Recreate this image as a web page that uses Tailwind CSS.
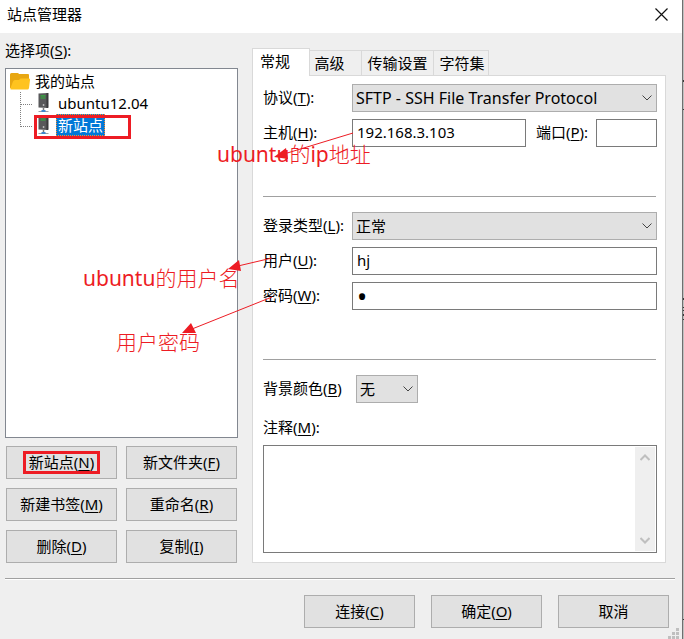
<!DOCTYPE html>
<html lang="zh-CN">
<head>
<meta charset="utf-8">
<meta name="viewport" content="width=device-width, initial-scale=1">
<title>站点管理器</title>
<script src="https://cdn.jsdelivr.net/npm/@tailwindcss/browser@4"></script>
</head>
<body class="min-h-screen bg-[#efefef] font-['Noto_Sans','Noto_Sans_CJK_SC',sans-serif] text-[15px] leading-5 text-black">
<div class="relative flex min-h-screen">
  <div class="flex min-w-0 flex-1 flex-col border-r border-[#6f6f6f]">
    <header class="flex h-[33px] items-center justify-between bg-white pr-[14px] pb-1 pl-[7px]">
      <h1 class="pb-[2px]">站点管理器</h1>
      <button type="button" aria-label="关闭">
        <svg class="block size-[13px]" viewBox="0 0 13 13" fill="none" stroke="#111" stroke-width="1.2"><path d="M.5.5l12 12M12.500.5l-12 12"/></svg>
      </button>
    </header>

    <main class="flex flex-1 gap-[14px] pr-4 pl-[5px]">
      <section class="flex w-[233px] shrink-0 flex-col pt-[7px]">
        <h2 id="tree-label">选择项(<u class="underline-offset-2">S</u>):</h2>
        <div role="tree" aria-labelledby="tree-label" class="mt-2 flex-1 border border-[#828790] bg-white pt-px pl-1">
          <div role="treeitem" class="flex h-[22px] items-center gap-[5px]">
            <svg class="h-[17px] w-5" viewBox="0 0 20 17"><path d="M0 1.500Q0 0 1.500 0h6q1 0 1.500 1h9q1 0 1 1v13H0z" fill="#e8a712"/><path d="M1.500 16.500Q0 16.500.5 15L3 8.500Q3.500 7 5 7h4l1.500-1.500H19q1.200 0 1 1.500l-1 8q-.3 1.500-1.500 1.500z" fill="#ffc31f"/></svg>
            <span>我的站点</span>
          </div>
          <div class="flex">
            <svg class="h-[44px] w-[28px]" viewBox="0 0 28 44" fill="none" stroke="#808080" stroke-dasharray="1 1"><path d="M10.500 0v35M11 12.500h12M11 34.500h12"/></svg>
            <div>
              <div role="treeitem" class="flex h-[22px] items-center gap-2">
                <svg class="h-5 w-3" viewBox="0 0 12 20"><path d="M.5.5L10 0v15l-9.500-.5z" fill="#58585a"/><path d="M8.500 0H10l.5.5v14l-.5.5H8.500z" fill="#39393b"/><path d="M2.500 2.800h5M2.500 5h5" stroke="#2fb43a" stroke-width="1.200"/><path d="M4.800 11h1.500v2H4.800z" fill="#b5b5b5"/><path d="M5.500 15v3" stroke="#777" stroke-width="1.500"/><path d="M.5 18.500h10" stroke="#9a9fa6"/><path d="M3.500 18h4" stroke="#3f86cc" stroke-width="2"/></svg>
                <span>ubuntu12.04</span>
              </div>
              <div role="treeitem" aria-selected="true" class="relative flex h-[22px] items-center gap-[6px]">
                <svg class="h-5 w-3" viewBox="0 0 12 20"><path d="M.5.5L10 0v15l-9.500-.5z" fill="#58585a"/><path d="M8.500 0H10l.5.5v14l-.5.5H8.500z" fill="#39393b"/><path d="M2.500 2.800h5M2.500 5h5" stroke="#2fb43a" stroke-width="1.200"/><path d="M4.800 11h1.500v2H4.800z" fill="#b5b5b5"/><path d="M5.500 15v3" stroke="#777" stroke-width="1.500"/><path d="M.5 18.500h10" stroke="#9a9fa6"/><path d="M3.500 18h4" stroke="#3f86cc" stroke-width="2"/></svg>
                <span class="border border-dotted border-[#ff8728] bg-[#0078d7] px-px text-white">新站点</span>
                <span class="absolute top-px -left-1 h-6 w-[97px] border-3 border-[#ed1c24]"></span>
              </div>
            </div>
          </div>
        </div>
        <div class="mx-px mt-2 grid grid-cols-2 gap-[9px]">
          <button type="button" class="relative h-[33px] border border-[#adadad] bg-[#e1e1e1] pb-[2px]">新站点(<u class="underline-offset-2">N</u>)<span class="absolute inset-x-4 inset-y-1 border-3 border-[#ed1c24]"></span></button>
          <button type="button" class="h-[33px] border border-[#adadad] bg-[#e1e1e1] pb-[2px]">新文件夹(<u class="underline-offset-2">F</u>)</button>
          <button type="button" class="h-[33px] border border-[#adadad] bg-[#e1e1e1] pb-[2px]">新建书签(<u class="underline-offset-2">M</u>)</button>
          <button type="button" class="h-[33px] border border-[#adadad] bg-[#e1e1e1] pb-[2px]">重命名(<u class="underline-offset-2">R</u>)</button>
          <button type="button" class="h-[33px] border border-[#adadad] bg-[#e1e1e1] pb-[2px]">删除(<u class="underline-offset-2">D</u>)</button>
          <button type="button" class="h-[33px] border border-[#adadad] bg-[#e1e1e1] pb-[2px]">复制(<u class="underline-offset-2">I</u>)</button>
        </div>
      </section>

      <section class="flex min-w-0 flex-1 flex-col pt-[15px]">
        <div role="tablist" class="flex items-end">
          <button type="button" role="tab" aria-selected="true" class="relative z-10 -mb-px h-7 w-[58px] border border-b-0 border-[#d9d9d9] bg-white pr-3 pb-1">常规</button>
          <button type="button" role="tab" class="h-[25px] w-[52px] border-t border-r border-[#d9d9d9] pr-3">高级</button>
          <button type="button" role="tab" class="h-[25px] w-[72px] border-t border-r border-[#d9d9d9]">传输设置</button>
          <button type="button" role="tab" class="h-[25px] w-[55px] border-t border-r border-[#d9d9d9] pl-[2px]">字符集</button>
        </div>
        <form class="flex flex-1 flex-col border border-[#d9d9d9] bg-white pt-2 pr-2 pb-[9px] pl-[10px]">
          <div class="grid grid-cols-[89px_minmax(0,1fr)] items-center gap-y-[7px]">
            <label for="protocol" class="pb-[2px]">协议(<u class="underline-offset-2">T</u>):</label>
            <div class="relative">
              <select id="protocol" class="h-7 w-full appearance-none border border-[#adadad] bg-[#e1e1e1] px-[3px] text-base leading-5"><option>SFTP - SSH File Transfer Protocol</option></select>
              <svg class="pointer-events-none absolute top-[11px] right-[5px] h-[6px] w-[10px]" viewBox="0 0 10 6" fill="none" stroke="#444"><path d="M.5.5L5 5 9.500.5"/></svg>
            </div>
            <label for="host" class="pb-[2px]">主机(<u class="underline-offset-2">H</u>):</label>
            <div class="flex items-center">
              <input id="host" type="text" value="192.168.3.103" class="h-7 min-w-0 flex-1 border border-[#7a7a7a] bg-white px-1 pb-[2px]">
              <label for="port" class="w-[70px] pb-[2px] pl-[10px] whitespace-nowrap">端口(<u class="underline-offset-2">P</u>):</label>
              <input id="port" type="text" class="h-7 w-[61px] border border-[#7a7a7a] bg-white px-1 pb-[2px]">
            </div>
          </div>
          <hr class="mt-[49px] mr-px border-[#a0a0a0]">
          <div class="mt-[15px] grid grid-cols-[89px_minmax(0,1fr)] items-center gap-y-[7px]">
            <label for="logon" class="pb-[2px] whitespace-nowrap">登录类型(<u class="underline-offset-2">L</u>):</label>
            <div class="relative">
              <select id="logon" class="h-7 w-full appearance-none border border-[#adadad] bg-[#e1e1e1] px-[3px]"><option>正常</option></select>
              <svg class="pointer-events-none absolute top-[11px] right-[5px] h-[6px] w-[10px]" viewBox="0 0 10 6" fill="none" stroke="#444"><path d="M.5.5L5 5 9.500.5"/></svg>
            </div>
            <label for="user" class="pb-[2px]">用户(<u class="underline-offset-2">U</u>):</label>
            <input id="user" type="text" value="hj" class="h-7 w-full border border-[#7a7a7a] bg-white px-1 pb-[2px]">
            <label for="pass" class="pb-[2px]">密码(<u class="underline-offset-2">W</u>):</label>
            <input id="pass" type="password" value="1" class="h-7 w-full border border-[#7a7a7a] bg-white px-1 text-[27px] leading-6">
          </div>
          <hr class="mt-[49px] mr-px border-[#a0a0a0]">
          <div class="mt-[15px] flex items-center">
            <label for="bg" class="w-[93px] pb-[2px] whitespace-nowrap">背景颜色(<u class="underline-offset-2">B</u>)</label>
            <div class="relative">
              <select id="bg" class="h-7 w-[62px] appearance-none border border-[#adadad] bg-[#e1e1e1] px-[3px]"><option>无</option></select>
              <svg class="pointer-events-none absolute top-[11px] right-[5px] h-[6px] w-[10px]" viewBox="0 0 10 6" fill="none" stroke="#444"><path d="M.5.5L5 5 9.500.5"/></svg>
            </div>
          </div>
          <label for="notes" class="mt-[14px]">注释(<u class="underline-offset-2">M</u>):</label>
          <div class="mt-2 flex min-h-[108px] flex-1 border border-[#7a7a7a] p-px">
            <textarea id="notes" class="min-w-0 flex-1 resize-none bg-white px-1"></textarea>
            <div class="flex w-5 flex-col items-center justify-between bg-[#efefef] py-[7px]">
              <svg class="h-[7px] w-[10px]" viewBox="0 0 10 7" fill="none" stroke="#bfbfbf" stroke-width="2"><path d="M.5 6L5 1.500 9.500 6"/></svg>
              <svg class="h-[7px] w-[10px]" viewBox="0 0 10 7" fill="none" stroke="#bfbfbf" stroke-width="2"><path d="M.5 1L5 5.500 9.500 1"/></svg>
            </div>
          </div>
        </form>
      </section>
    </main>

    <footer class="relative mt-[15px] mr-[7px] ml-[5px] flex justify-end gap-4 border-t border-[#a0a0a0] pt-4 pr-[6px] pb-[11px] shadow-[inset_0_1px_0_#fff]">
      <button type="button" class="h-[33px] w-[111px] border border-[#adadad] bg-[#e1e1e1] pb-[2px]">连接(<u class="underline-offset-2">C</u>)</button>
      <button type="button" class="h-[33px] w-[111px] border border-[#adadad] bg-[#e1e1e1] pb-[2px]">确定(<u class="underline-offset-2">O</u>)</button>
      <button type="button" class="h-[33px] w-[111px] border border-[#adadad] bg-[#e1e1e1] pb-[2px]">取消</button>
      <svg class="absolute -right-1 bottom-0 size-[11px]" viewBox="0 0 11 11" fill="#bfbfbf"><path d="M8 0h3v3H8zM4 4h3v3H4zM8 4h3v3H8zM0 8h3v3H0zM4 8h3v3H4zM8 8h3v3H8z"/></svg>
    </footer>
  </div>
  <svg class="w-px bg-[#c0c0c0]" viewBox="0 0 1 639" preserveAspectRatio="none"><path d="M0 80h1v2H0zM0 109h1v1H0zM0 298h1v2H0zM0 307h1v1H0zM0 310h1v1H0zM0 314h1v2H0zM0 319h1v1H0zM0 619h1v1H0z" fill="#3c3c3c"/></svg>

  <svg class="pointer-events-none absolute top-0 left-0 h-[400px] w-[400px]" viewBox="0 0 400 400" fill="#ed1c24" stroke="#ed1c24">
    <path d="M353 133L284 154M272 258L238 266M272 297L192 329"/>
    <path stroke="none" d="M274 157l12-9 2 11zM228 269l11-9 2 11zM182 333l9-10 5 10z"/>
  </svg>
  <p class="absolute top-[140px] left-[217px] text-[21px] leading-7 font-light whitespace-nowrap text-[#ed1c24]"><span class="font-normal">ubuntu</span>的<span class="font-normal">ip</span>地址</p>
  <p class="absolute top-[264px] left-[83px] text-[21px] leading-7 font-light whitespace-nowrap text-[#ed1c24]"><span class="font-normal">ubuntu</span>的用户名</p>
  <p class="absolute top-[328px] left-[116px] text-[21px] leading-7 font-light whitespace-nowrap text-[#ed1c24]">用户密码</p>
</div>
</body>
</html>
